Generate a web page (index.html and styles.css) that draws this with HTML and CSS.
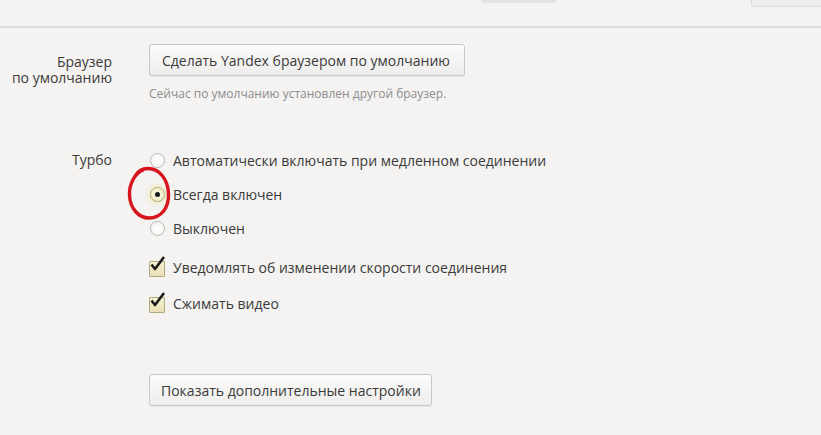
FILE: index.html
```html
<!DOCTYPE html>
<html>
<head>
    <meta name="viewport" content="width=device-width, initial-scale=1.0">
    <link rel="stylesheet" href="styles.css">
</head>
<body>
    <div class="topbar">
        <div class="tab-stub tab-left"></div>
        <div class="tab-stub tab-right"></div>
    </div>

    <div class="settings">
        <div class="row row-browser">
            <div class="label">Браузер<br>по умолчанию</div>
            <div class="content">
                <button class="btn btn-wide">Сделать Yandex браузером по умолчанию</button>
                <div class="hint">Сейчас по умолчанию установлен другой браузер.</div>
            </div>
        </div>

        <div class="row row-turbo">
            <div class="label">Турбо</div>
            <div class="content">
                <div class="option">
                    <span class="radio"></span>
                    <span>Автоматически включать при медленном соединении</span>
                </div>
                <div class="option">
                    <span class="radio radio-on"></span>
                    <span>Всегда включен</span>
                    <!-- hand drawn marker from the screenshot -->
                    <svg class="scribble" width="46" height="56" viewBox="0 0 46 56">
                        <path d="M16 5 C 7 9, 2 20, 2.5 30 C 3 44, 12 53, 22 53 C 34 53, 42 43, 41.5 29 C 41 15, 33 3.5, 21 3.5 C 15 3.5, 11 6, 8 11" fill="none" stroke="#d8141c" stroke-width="3.4" stroke-linecap="round"/>
                    </svg>
                </div>
                <div class="option">
                    <span class="radio"></span>
                    <span>Выключен</span>
                </div>

                <div class="option option-check">
                    <span class="check"><svg width="18" height="18" viewBox="0 0 18 18"><path d="M3.5 8.5 L7 13 L16 1" fill="none" stroke="#1c1c1c" stroke-width="2.6" stroke-linejoin="round"/></svg></span>
                    <span>Уведомлять об изменении скорости соединения</span>
                </div>
                <div class="option option-check">
                    <span class="check"><svg width="18" height="18" viewBox="0 0 18 18"><path d="M3.5 8.5 L7 13 L16 1" fill="none" stroke="#1c1c1c" stroke-width="2.6" stroke-linejoin="round"/></svg></span>
                    <span>Сжимать видео</span>
                </div>
            </div>
        </div>

        <div class="row row-more">
            <div class="label"></div>
            <div class="content">
                <button class="btn">Показать дополнительные настройки</button>
            </div>
        </div>
    </div>
</body>
</html>
```

FILE: styles.css
```css
body {
    margin: 0;
    background-color: #f4f3f1;
    font-family: "Open Sans", "Noto Sans", sans-serif;
    font-size: 14px;
    color: #3a3a3a;
    height: 435px;
    overflow: hidden;
}

.topbar {
    height: 26px;
    border-bottom: 2px solid #dddcda;
    position: relative;
}

.tab-stub {
    position: absolute;
    top: 0;
    height: 3px;
    background: #e4e3e1;
    border-radius: 0 0 4px 4px;
}

.tab-left { left: 482px; width: 75px; }
.tab-right { left: 751px; width: 80px; height: 6px; border: 1px solid #dedddb; border-top: none; background: #eeedeb; }

.settings {
    padding-top: 16px;
}

.row {
    display: grid;
    grid-template-columns: 112px 1fr;
    column-gap: 37px;
}

.label {
    text-align: right;
    line-height: 16px;
    padding-top: 10px;
}

.btn {
    font-family: inherit;
    font-size: 14px;
    color: #3a3a3a;
    background: linear-gradient(#fbfbfa, #eeedeb);
    border: 1px solid #c9c8c5;
    border-radius: 3px;
    height: 32px;
    padding: 0 10px 0 11px;
    box-shadow: 0 1px 1px rgba(0,0,0,0.06);
}

.btn-wide {
    padding: 0 14px 0 12px;
}

.hint {
    font-size: 12px;
    color: #8d8d8d;
    margin-top: 9px;
}

.row-turbo {
    margin-top: 48px;
}

.row-turbo .label {
    padding-top: 0;
    line-height: 20px;
}

.option {
    display: flex;
    align-items: center;
    gap: 8px;
    height: 20px;
    margin-bottom: 14px;
    position: relative;
}

.radio {
    width: 13px;
    height: 13px;
    border-radius: 50%;
    border: 1px solid #b9b8b5;
    background: radial-gradient(#ffffff, #f3f2ef);
    margin-left: 1px;
    flex: none;
    position: relative;
}

.radio-on {
    border-color: #b5ac7e;
    background: radial-gradient(#fdfbe8, #efe8b8);
    box-shadow: 0 0 4px 2px rgba(235, 228, 150, 0.55);
}

.radio-on::after {
    content: "";
    position: absolute;
    left: 4px;
    top: 4px;
    width: 5px;
    height: 5px;
    border-radius: 50%;
    background: #1a1a1a;
}

.row-turbo .option:nth-child(4) {
    margin-top: 19px;
    margin-bottom: 16px;
}

.check {
    width: 14px;
    height: 14px;
    border: 1px solid #b3a97f;
    background: linear-gradient(#f6f0d2, #e9e0b6);
    border-radius: 1px;
    flex: none;
    position: relative;
    margin-top: 4px;
}

.check svg {
    position: absolute;
    left: -2px;
    top: -6px;
}

.scribble {
    position: absolute;
    left: -22px;
    top: -19px;
    pointer-events: none;
}

.row-more {
    margin-top: 47px;
}
```
